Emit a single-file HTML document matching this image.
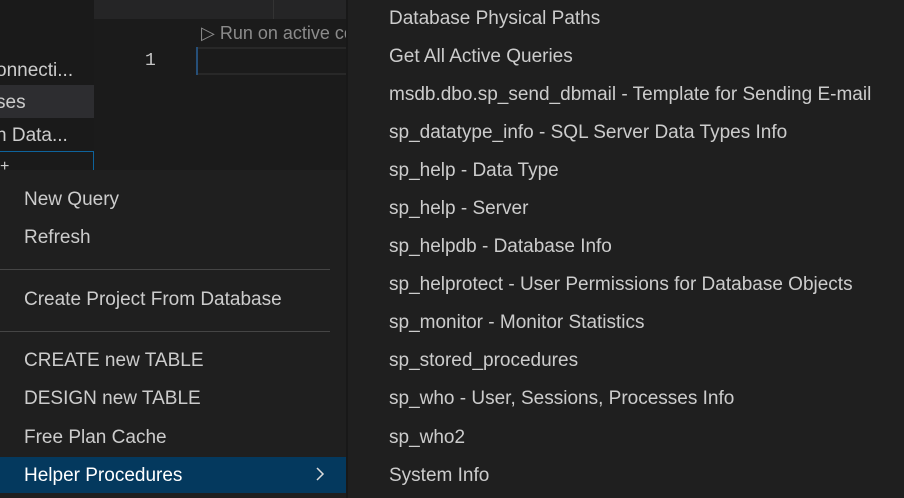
<html><head><style>
body{margin:0;width:904px;height:498px;background:#181818;overflow:hidden;position:relative;font-family:"Liberation Sans",sans-serif;color:#cccccc}
div{position:absolute}
.t{font-size:19px;white-space:nowrap;line-height:22px;margin-top:1px}
</style></head><body>
<div style="left:0;top:0;width:94px;height:170px;background:#1a1a1a"></div>
<div style="left:94px;top:0;width:254px;height:19px;background:#252526"></div>
<div style="left:273px;top:0;width:1px;height:19px;background:#333"></div>
<div style="left:94px;top:19px;width:254px;height:151px;background:#1b1b1b"></div>
<div style="left:0;top:85px;width:94px;height:33px;background:#2d2d30"></div>
<div style="left:0;top:151px;width:94px;height:19px;border-top:1px solid #0e639c;border-right:1px solid #0e639c;box-sizing:border-box"></div>
<div class="t" style="left:-4px;top:59px">onnecti...</div>
<div class="t" style="left:-4px;top:91px">ses</div>
<div class="t" style="left:-4px;top:124px">n Data...</div>
<div class="t" style="left:0;top:155px;font-size:16px">+</div>
<div style="left:145px;top:51px;font-size:18px;color:#c6c6c6;font-family:'Liberation Mono',monospace">1</div>
<div style="left:196px;top:47px;width:152px;height:28px;border-top:2px solid #282828;border-bottom:2px solid #282828;box-sizing:border-box"></div>
<div style="left:196px;top:47px;width:2px;height:28px;background:#264f78"></div>
<div class="t" style="left:201px;top:21px;font-size:18px;color:#8b8b8b">▷ Run on active co</div>
<div style="left:0;top:170px;width:346px;height:328px;background:#1f1f1f"></div>
<div style="left:0;top:269px;width:330px;height:1px;background:#454545"></div>
<div style="left:0;top:331px;width:330px;height:1px;background:#454545"></div>
<div style="left:0;top:457px;width:346px;height:36px;background:#04395e"></div>
<div class="t" style="left:24px;top:188px">New Query</div>
<div class="t" style="left:24px;top:226px">Refresh</div>
<div class="t" style="left:24px;top:288px">Create Project From Database</div>
<div class="t" style="left:24px;top:349px">CREATE new TABLE</div>
<div class="t" style="left:24px;top:387px">DESIGN new TABLE</div>
<div class="t" style="left:24px;top:426px">Free Plan Cache</div>
<div class="t" style="left:24px;top:464px;color:#fff">Helper Procedures</div>
<svg style="position:absolute;left:314px;top:466px" width="12" height="16"><path d="M3 2 L9 8 L3 14" stroke="#ddd" stroke-width="1.5" fill="none"/></svg>
<div style="left:346px;top:0;width:2px;height:498px;background:#181818"></div>
<div style="left:348px;top:0;width:556px;height:498px;background:#1f1f1f"></div>
<div class="t" style="left:389px;top:7px">Database Physical Paths</div>
<div class="t" style="left:389px;top:45px">Get All Active Queries</div>
<div class="t" style="left:389px;top:83px">msdb.dbo.sp_send_dbmail - Template for Sending E-mail</div>
<div class="t" style="left:389px;top:121px">sp_datatype_info - SQL Server Data Types Info</div>
<div class="t" style="left:389px;top:159px">sp_help - Data Type</div>
<div class="t" style="left:389px;top:197px">sp_help - Server</div>
<div class="t" style="left:389px;top:235px">sp_helpdb - Database Info</div>
<div class="t" style="left:389px;top:273px">sp_helprotect - User Permissions for Database Objects</div>
<div class="t" style="left:389px;top:311px">sp_monitor - Monitor Statistics</div>
<div class="t" style="left:389px;top:349px">sp_stored_procedures</div>
<div class="t" style="left:389px;top:387px">sp_who - User, Sessions, Processes Info</div>
<div class="t" style="left:389px;top:426px">sp_who2</div>
<div class="t" style="left:389px;top:464px">System Info</div>
</body></html>
